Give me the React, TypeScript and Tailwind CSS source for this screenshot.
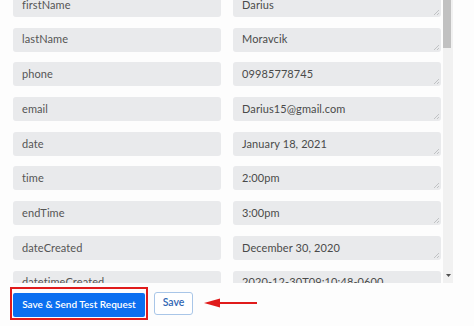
import React from "react";

const rows: [string, string][] = [
  ["firstName", "Darius"],
  ["lastName", "Moravcik"],
  ["phone", "09985778745"],
  ["email", "Darius15@gmail.com"],
  ["date", "January 18, 2021"],
  ["time", "2:00pm"],
  ["endTime", "3:00pm"],
  ["dateCreated", "December 30, 2020"],
  ["datetimeCreated", "2020-12-30T09:10:48-0600"],
];

function Grip() {
  return (
    <svg width="6" height="6" viewBox="0 0 6 6" className="absolute right-[2px] bottom-[2px]">
      <path d="M1 6 L6 1 M4 6 L6 4" stroke="#b5b7ba" strokeWidth="0.8" />
    </svg>
  );
}

export default function App() {
  return (
    <div
      className="w-[474px] h-[326px] bg-[#fdfdfd] overflow-hidden flex flex-col"
      style={{ fontFamily: "Lato, 'Open Sans', sans-serif" }}
    >
      <div className="flex h-[283px] overflow-hidden">
        <div className="w-[443px] pl-[13px] pr-[2px] overflow-hidden">
          <div className="-mt-[7px] grid grid-cols-[208px_208px] gap-x-[12px] gap-y-[10.7px]">
            {rows.map(([label, value]) => (
              <React.Fragment key={label}>
                <div className="h-[24px] rounded-[3px] bg-[#e9eaec] px-[9px] flex items-center text-[11px] tracking-[0.1px] text-[#555]">
                  {label}
                </div>
                <div className="relative h-[24px] rounded-[3px] bg-[#e9eaec] px-[9px] flex items-center text-[11px] tracking-[0.1px] text-[#4a4a4a]">
                  {value}
                  <Grip />
                </div>
              </React.Fragment>
            ))}
          </div>
        </div>
        <div className="w-[10px] bg-[#f1f1f1] flex flex-col">
          <div className="w-[8px] h-[48px] bg-[#c1c1c1]" />
          <div className="flex-1" />
          <div className="h-[10px] flex items-start justify-center pt-[1px]">
            <svg width="5" height="4" viewBox="0 0 5 4">
              <path d="M0 0 H5 L2.5 3 Z" fill="#505050" />
            </svg>
          </div>
        </div>
      </div>

      <div className="flex items-center pl-[10px] pt-[4px]">
        <div className="border-2 border-[#e01b1b] p-[1px]">
          <button className="h-[24px] w-[132px] rounded-[2px] bg-[#0b6ff0] text-white text-[10px] font-semibold">
            Save &amp; Send Test Request
          </button>
        </div>
        <button className="ml-[6px] h-[23px] w-[39px] rounded-[3px] border border-[#a9c6e8] bg-white text-[#2f66b3] text-[10.5px] font-semibold">
          Save
        </button>
        <svg width="54" height="12" viewBox="0 0 54 12" className="ml-[11px]">
          <path d="M0 6 L16 1.5 L16 10.5 Z" fill="#e01b1b" />
          <rect x="15" y="5" width="38" height="2" fill="#e01b1b" />
        </svg>
      </div>
    </div>
  );
}
